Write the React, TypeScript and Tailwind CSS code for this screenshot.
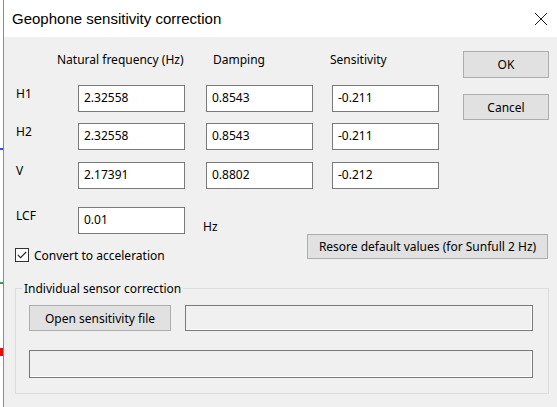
import React from "react";

const font = { fontFamily: '"Noto Sans", "Open Sans", sans-serif' };

const rows = [
  { label: "H1", values: ["2.32558", "0.8543", "-0.211"], mt: "mt-[17px]" },
  { label: "H2", values: ["2.32558", "0.8543", "-0.211"], mt: "mt-[11px]" },
  { label: "V", values: ["2.17391", "0.8802", "-0.212"], mt: "mt-[12px]" },
];

const Field = ({ value, className = "" }: { value: string; className?: string }) => (
  <div
    className={`h-[27px] w-[107px] shrink-0 border border-[#7a7a7a] bg-white pl-[5px] pt-[3px] leading-[17px] ${className}`}
  >
    {value}
  </div>
);

const Button = ({ children, className = "" }: { children: React.ReactNode; className?: string }) => (
  <div
    className={`flex items-center justify-center border border-[#adadad] bg-[#e1e1e1] leading-[17px] text-black ${className}`}
  >
    {children}
  </div>
);

export default function App() {
  return (
    <div
      className="flex h-[407px] w-[557px] overflow-hidden bg-[#f0f0f0] text-[12px] text-black"
      style={font}
    >
      {/* bits of the window behind */}
      <div className="flex w-[3px] shrink-0 flex-col bg-white">
        <div className="h-[148px]" />
        <div className="h-[2px] bg-[#3b4fc4]" />
        <div className="h-[132px]" />
        <div className="h-[2px] bg-[#3a9a5a]" />
        <div className="h-[64px]" />
        <div className="h-[8px] bg-[#e01010]" />
      </div>
      <div className="flex min-w-0 flex-1 flex-col border-l border-[#8a8a8a]">
        {/* Title bar */}
        <div className="flex h-[37px] shrink-0 items-center bg-white pl-[8px]">
          <span className="font-['Liberation_Sans',sans-serif] text-[15px] leading-[20px]">
            Geophone sensitivity correction
          </span>
          <svg width="14" height="14" viewBox="0 0 14 14" className="ml-auto mr-[9px] mt-[1px]">
            <path d="M1 1L13 13M13 1L1 13" stroke="#1a1a1a" strokeWidth="1" fill="none" />
          </svg>
        </div>

        {/* Top section */}
        <div className="flex pt-[14px]">
          <div className="flex flex-col">
            <div className="flex h-[17px] leading-[17px]">
              <span className="w-[156px] pl-[53px] box-content whitespace-nowrap">Natural frequency (Hz)</span>
              <span className="w-[117px]">Damping</span>
              <span>Sensitivity</span>
            </div>
            {rows.map((r) => (
              <div key={r.label} className={`flex items-start ${r.mt}`}>
                <span className="w-[62px] pl-[12px] box-content leading-[17px]">{r.label}</span>
                <Field value={r.values[0]} />
                <Field value={r.values[1]} className="ml-[21px]" />
                <Field value={r.values[2]} className="ml-[19px]" />
              </div>
            ))}
          </div>
          <div className="ml-auto mr-[8px] flex flex-col">
            <Button className="h-[27px] w-[86px]">OK</Button>
            <Button className="mt-[16px] h-[26px] w-[86px]">Cancel</Button>
          </div>
        </div>

        {/* LCF + convert + restore */}
        <div className="flex items-start">
          <div className="flex flex-col">
            <div className="mt-[18px] flex items-start">
              <span className="w-[62px] pl-[12px] box-content leading-[17px]">LCF</span>
              <Field value="0.01" />
              <span className="ml-[18px] mt-[11px] leading-[17px]">Hz</span>
            </div>
            <div className="ml-[11px] mt-[13px] flex h-[14px] items-center">
              <div className="flex h-[14px] w-[14px] items-center justify-center border border-[#333] bg-white">
                <svg width="10" height="8" viewBox="0 0 10 8">
                  <path d="M0.8 3.8L3.6 6.6L9.2 1" stroke="#222" strokeWidth="1.1" fill="none" />
                </svg>
              </div>
              <span className="ml-[5px] leading-[17px]">Convert to acceleration</span>
            </div>
          </div>
          <Button className="ml-auto mr-[9px] mt-[45px] h-[25px] w-[241px] whitespace-nowrap">
            Resore default values (for Sunfull 2 Hz)
          </Button>
        </div>

        {/* Group box */}
        <fieldset className="ml-[11px] mr-[8px] mt-[18px] border border-[#dcdcdc] pb-[15px] pl-[13px] pr-[15px]">
          <legend className="-ml-[7px] px-[2px] leading-[17px]">Individual sensor correction</legend>
          <div className="mt-[8px] flex">
            <Button className="h-[26px] w-[142px]">Open sensitivity file</Button>
            <div className="ml-[14px] h-[26px] flex-1 border border-[#7a7a7a] shadow-[inset_-1px_-1px_0_#fff]" />
          </div>
          <div className="mt-[19px] h-[28px] border border-[#7a7a7a] shadow-[inset_-1px_-1px_0_#fff]" />
        </fieldset>
      </div>
    </div>
  );
}
